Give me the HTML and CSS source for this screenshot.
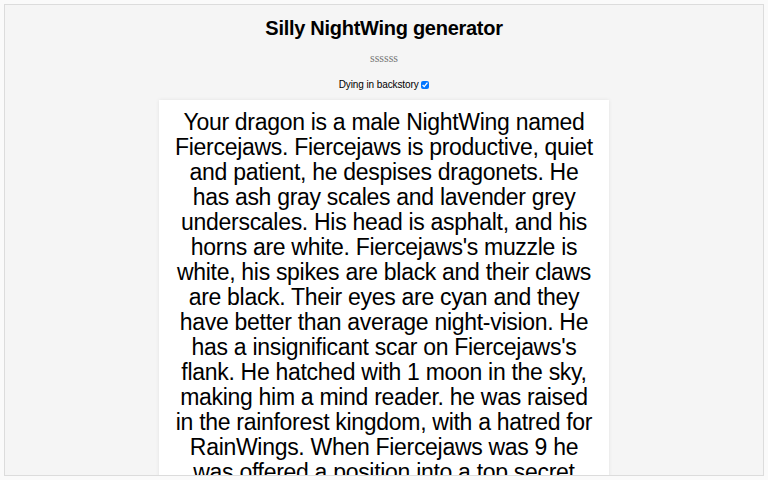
FILE: index.html
```html
<!DOCTYPE html>
<html lang="en">
<head>
    <meta charset="UTF-8">
    <meta name="viewport" content="width=device-width, initial-scale=1.0">
    <title>Silly NightWing generator</title>
    <link rel="stylesheet" href="styles.css">
</head>
<body>
    <div class="frame">
        <h1>Silly NightWing generator</h1>
        <p class="sub">ssssss</p>
        <label class="option" for="dying">Dying in backstory <input type="checkbox" id="dying" checked></label>
        <div class="card">
            <p id="output">Your dragon is a male NightWing named Fiercejaws. Fiercejaws is productive, quiet and patient, he despises dragonets. He has ash gray scales and lavender grey underscales. His head is asphalt, and his horns are white. Fiercejaws's muzzle is white, his spikes are black and their claws are black. Their eyes are cyan and they have better than average night-vision. He has a insignificant scar on Fiercejaws's flank. He hatched with 1 moon in the sky, making him a mind reader. he was raised in the rainforest kingdom, with a hatred for RainWings. When Fiercejaws was 9 he was offered a position into a top secret program.</p>
        </div>
    </div>
</body>
</html>
```

FILE: styles.css
```css
body {
    margin: 4px;
    background-color: #fafafa;
    font-family: "Liberation Sans", Arial, sans-serif;
}
.frame {
    height: 470px;
    overflow: hidden;
    background-color: #f5f5f5;
    border: 1px solid #dcdcdc;
    text-align: center;
}
h1 {
    margin: 11px 0 0;
    font-size: 20px;
    line-height: 24px;
    letter-spacing: -0.28px;
    color: #000;
}
.sub {
    margin: 11px 0 0;
    font-family: "Liberation Serif", serif;
    font-size: 12px;
    line-height: 14px;
    color: #777;
}
.option {
    display: block;
    margin-top: 14px;
    font-size: 10px;
    line-height: 12px;
    letter-spacing: -0.1px;
    color: #000;
}
.option input {
    width: 8px;
    height: 8px;
    margin: 0;
    vertical-align: -1px;
}
.card {
    width: 422px;
    margin: 9px auto 0;
    padding: 10px 14px;
    background: #fff;
    box-shadow: 0 0 4px rgba(0, 0, 0, 0.08);
}
.card p {
    margin: 0;
    font-size: 23px;
    line-height: 25px;
    letter-spacing: -0.3px;
    color: #000;
}
```
